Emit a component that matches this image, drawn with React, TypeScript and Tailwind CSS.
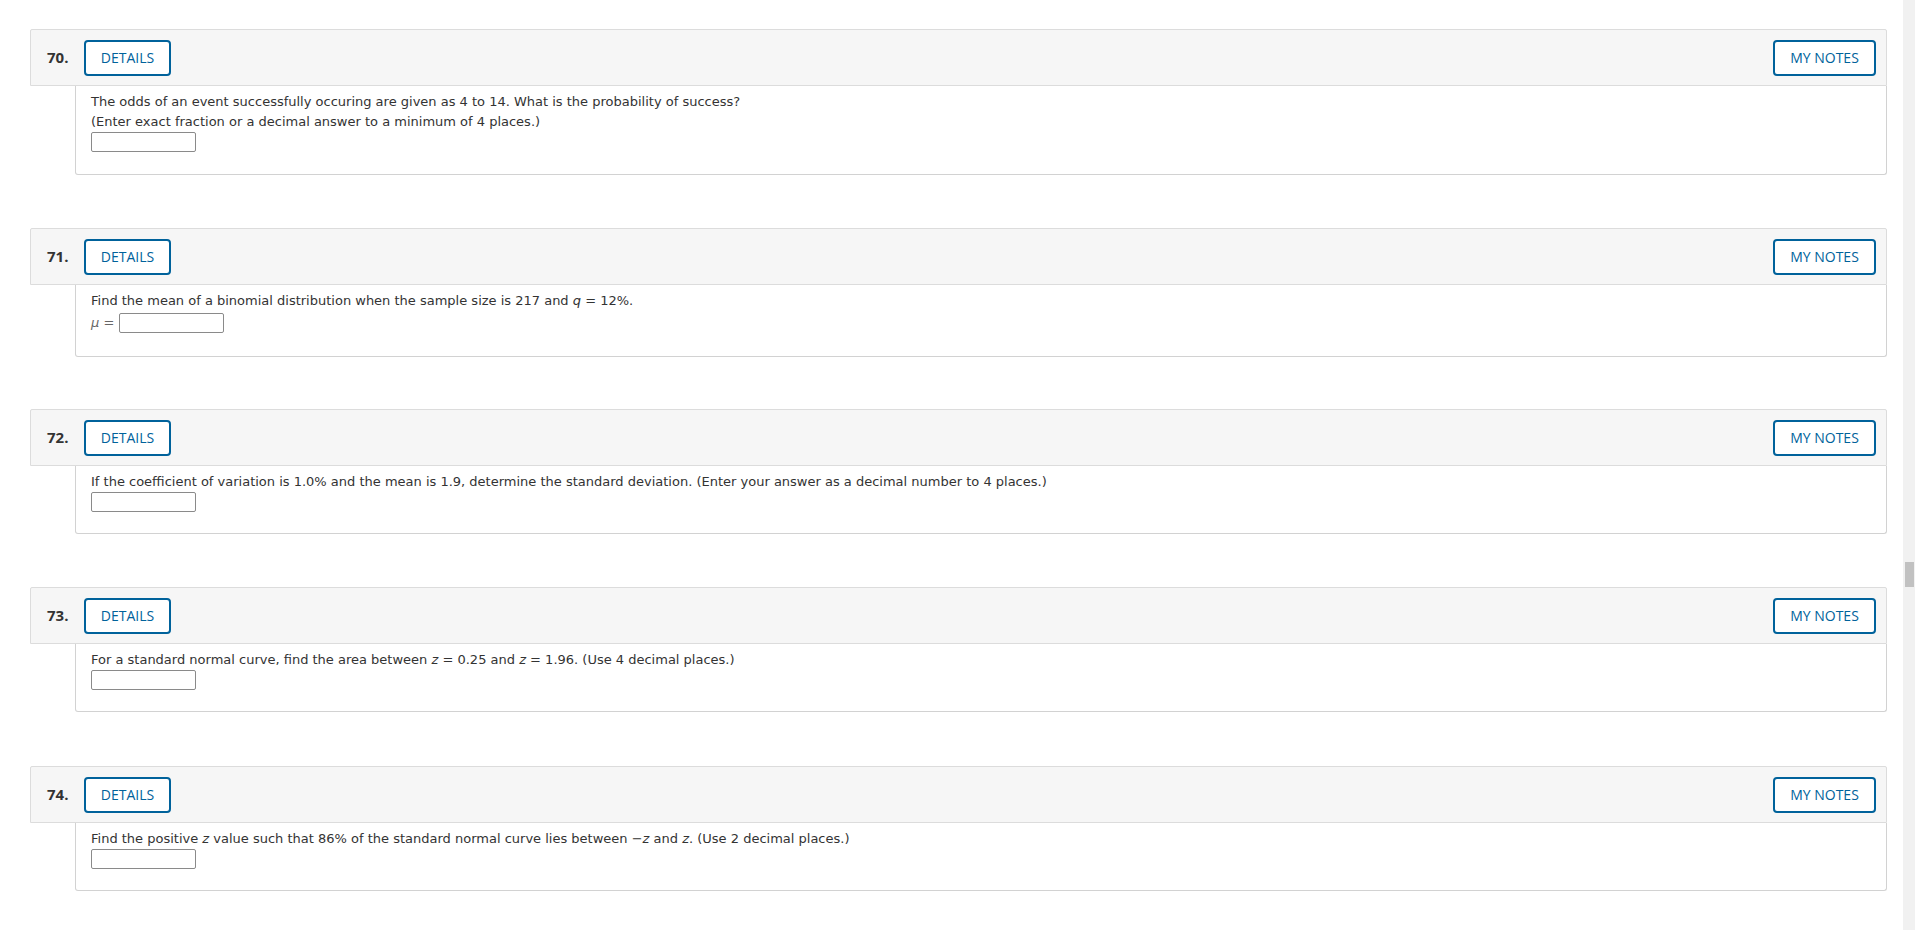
import React from "react";

const bodyFont = { fontFamily: '"DejaVu Sans", Verdana, sans-serif' };

function Btn({ label, w }: { label: string; w: string }) {
  return (
    <button
      className={`h-[36px] ${w} border-2 border-[#00629b] rounded-[4px] bg-white text-[14px] text-[#00629b] flex items-center justify-center`}
      style={{ fontFamily: '"Open Sans", sans-serif' }}
    >
      {label}
    </button>
  );
}

function Input({ className = "" }: { className?: string }) {
  return <div className={`w-[105px] h-[20px] border border-[#8a8a8a] rounded-[2px] bg-white ${className}`} />;
}

function Box({
  num,
  mt,
  pb = "pb-[21px]",
  children,
}: {
  num: string;
  mt: string;
  pb?: string;
  children: React.ReactNode;
}) {
  return (
    <div className={mt}>
      <div className="h-[57px] border border-[#dcdcdc] rounded-t-[2px] bg-[#f6f6f6] flex items-center pl-[16px] pr-[10px]">
        <span
          className="text-[15px] font-bold text-[#333] w-[37px]"
          style={{ fontFamily: '"Open Sans", sans-serif' }}
        >
          {num}
        </span>
        <Btn label="DETAILS" w="w-[87px]" />
        <div className="flex-1" />
        <Btn label="MY NOTES" w="w-[103px]" />
      </div>
      <div
        className={`ml-[45px] border-x border-b border-[#d2d2d2] rounded-b-[3px] bg-white pl-[15px] pt-[6px] ${pb} text-[13px] leading-[20px] text-[#333]`}
        style={bodyFont}
      >
        {children}
      </div>
    </div>
  );
}

export default function App() {
  return (
    <div className="h-screen w-full overflow-hidden flex bg-white">
      <div className="flex-1 pl-[30px] pr-[16px] pt-[29px]">
        <Box num="70." mt="mt-0" pb="pb-[22px]">
          <div>The odds of an event successfully occuring are given as 4 to 14. What is the probability of success?</div>
          <div>(Enter exact fraction or a decimal answer to a minimum of 4 places.)</div>
          <Input />
        </Box>
        <Box num="71." mt="mt-[53px]">
          <div>
            Find the mean of a binomial distribution when the sample size is 217 and <i>q</i> = 12%.
          </div>
          <div className="h-[24px] flex items-center">
            <span className="text-[#666]">
              <i>μ</i> =
            </span>
            <Input className="ml-[5px]" />
          </div>
        </Box>
        <Box num="72." mt="mt-[52px]">
          <div>
            If the coefficient of variation is 1.0% and the mean is 1.9, determine the standard deviation. (Enter your answer as a decimal number to 4 places.)
          </div>
          <Input />
        </Box>
        <Box num="73." mt="mt-[53px]">
          <div>
            For a standard normal curve, find the area between <i>z</i> = 0.25 and <i>z</i> = 1.96. (Use 4 decimal places.)
          </div>
          <Input />
        </Box>
        <Box num="74." mt="mt-[54px]">
          <div>
            Find the positive <i>z</i> value such that 86% of the standard normal curve lies between −<i>z</i> and <i>z</i>. (Use 2 decimal places.)
          </div>
          <Input />
        </Box>
      </div>
      <div className="w-[12px] h-full bg-[#f1f1f1] pt-[562px] pl-[2px] pr-[1px]">
        <div className="h-[25px] bg-[#c1c1c1]" />
      </div>
    </div>
  );
}
